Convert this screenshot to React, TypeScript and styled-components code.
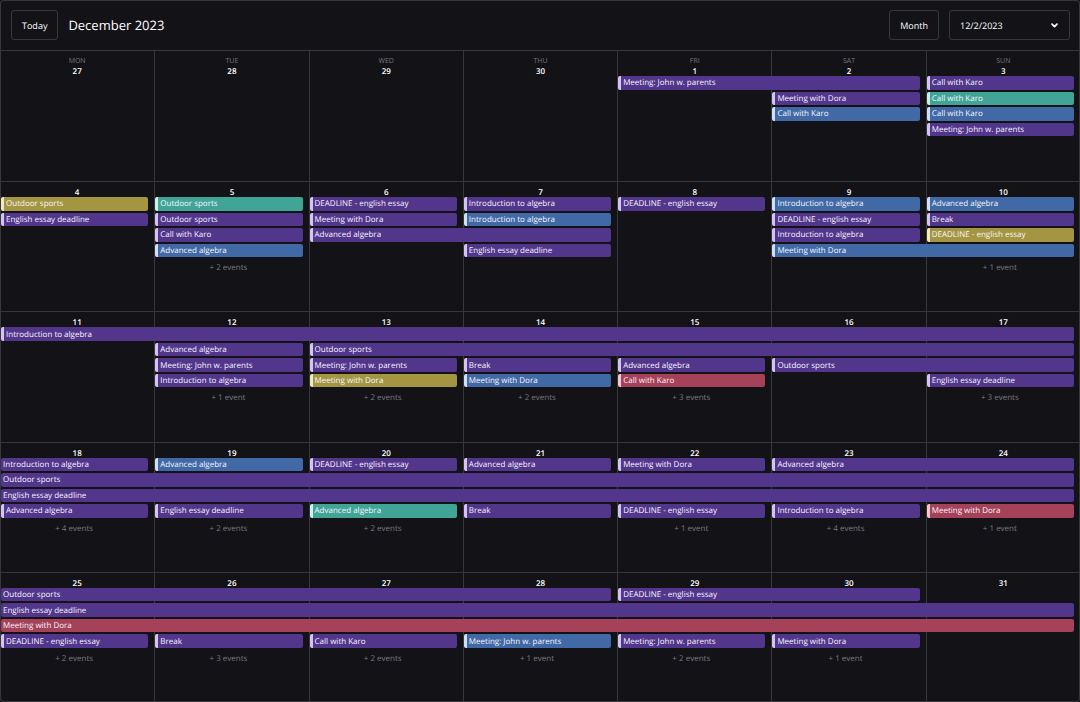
import React, { useState } from "react";
import styled, { createGlobalStyle } from "styled-components";

type Tone = "purple" | "blue" | "teal" | "olive" | "red";

interface CalendarEvent {
  title: string;
  lane: number;
  start: number;
  span: number;
  tone: Tone;
  continued: boolean;
}

interface Week {
  days: number[];
  events: CalendarEvent[];
  more: number[];
}

const line = "#38373b";

const tones: Record<Tone, { fill: string; edge: string }> = {
  purple: { fill: "#51368b", edge: "#d5c3f3" },
  blue: { fill: "#4069a5", edge: "#cfe0f7" },
  teal: { fill: "#40a497", edge: "#c8f3ec" },
  olive: { fill: "#a39541", edge: "#f1e9be" },
  red: { fill: "#a54158", edge: "#f6c6d1" },
};

const ev = (
  lane: number,
  start: number,
  span: number,
  title: string,
  tone: Tone = "purple",
  continued = false
): CalendarEvent => ({ lane, start, span, title, tone, continued });

const ALGEBRA = "Introduction to algebra";
const ADVANCED = "Advanced algebra";
const SPORTS = "Outdoor sports";
const ESSAY = "English essay deadline";
const DEADLINE = "DEADLINE - english essay";
const DORA = "Meeting with Dora";
const JOHN = "Meeting: John w. parents";
const KARO = "Call with Karo";
const BREAK = "Break";

const weekdays = ["MON", "TUE", "WED", "THU", "FRI", "SAT", "SUN"];

const weeks: Week[] = [
  {
    days: [27, 28, 29, 30, 1, 2, 3],
    events: [
      ev(1, 5, 2, JOHN),
      ev(1, 7, 1, KARO),
      ev(2, 6, 1, DORA),
      ev(2, 7, 1, KARO, "teal"),
      ev(3, 6, 1, KARO, "blue"),
      ev(3, 7, 1, KARO, "blue"),
      ev(4, 7, 1, JOHN),
    ],
    more: [0, 0, 0, 0, 0, 0, 0],
  },
  {
    days: [4, 5, 6, 7, 8, 9, 10],
    events: [
      ev(1, 1, 1, SPORTS, "olive"),
      ev(1, 2, 1, SPORTS, "teal"),
      ev(1, 3, 1, DEADLINE),
      ev(1, 4, 1, ALGEBRA),
      ev(1, 5, 1, DEADLINE),
      ev(1, 6, 1, ALGEBRA, "blue"),
      ev(1, 7, 1, ADVANCED, "blue"),
      ev(2, 1, 1, ESSAY),
      ev(2, 2, 1, SPORTS),
      ev(2, 3, 1, DORA),
      ev(2, 4, 1, ALGEBRA, "blue"),
      ev(2, 6, 1, DEADLINE),
      ev(2, 7, 1, BREAK),
      ev(3, 2, 1, KARO),
      ev(3, 3, 2, ADVANCED),
      ev(3, 6, 1, ALGEBRA),
      ev(3, 7, 1, DEADLINE, "olive"),
      ev(4, 2, 1, ADVANCED, "blue"),
      ev(4, 4, 1, ESSAY),
      ev(4, 6, 2, DORA, "blue"),
    ],
    more: [0, 2, 0, 0, 0, 0, 1],
  },
  {
    days: [11, 12, 13, 14, 15, 16, 17],
    events: [
      ev(1, 1, 7, ALGEBRA),
      ev(2, 2, 1, ADVANCED),
      ev(2, 3, 5, SPORTS),
      ev(3, 2, 1, JOHN),
      ev(3, 3, 1, JOHN),
      ev(3, 4, 1, BREAK),
      ev(3, 5, 1, ADVANCED),
      ev(3, 6, 2, SPORTS),
      ev(4, 2, 1, ALGEBRA),
      ev(4, 3, 1, DORA, "olive"),
      ev(4, 4, 1, DORA, "blue"),
      ev(4, 5, 1, KARO, "red"),
      ev(4, 7, 1, ESSAY),
    ],
    more: [0, 1, 2, 2, 3, 0, 3],
  },
  {
    days: [18, 19, 20, 21, 22, 23, 24],
    events: [
      ev(1, 1, 1, ALGEBRA, "purple", true),
      ev(1, 2, 1, ADVANCED, "blue"),
      ev(1, 3, 1, DEADLINE),
      ev(1, 4, 1, ADVANCED),
      ev(1, 5, 1, DORA),
      ev(1, 6, 2, ADVANCED),
      ev(2, 1, 7, SPORTS, "purple", true),
      ev(3, 1, 7, ESSAY, "purple", true),
      ev(4, 1, 1, ADVANCED),
      ev(4, 2, 1, ESSAY),
      ev(4, 3, 1, ADVANCED, "teal"),
      ev(4, 4, 1, BREAK),
      ev(4, 5, 1, DEADLINE),
      ev(4, 6, 1, ALGEBRA),
      ev(4, 7, 1, DORA, "red"),
    ],
    more: [4, 2, 2, 0, 1, 4, 1],
  },
  {
    days: [25, 26, 27, 28, 29, 30, 31],
    events: [
      ev(1, 1, 4, SPORTS, "purple", true),
      ev(1, 5, 2, DEADLINE),
      ev(2, 1, 7, ESSAY, "purple", true),
      ev(3, 1, 7, DORA, "red", true),
      ev(4, 1, 1, DEADLINE),
      ev(4, 2, 1, BREAK),
      ev(4, 3, 1, KARO),
      ev(4, 4, 1, JOHN, "blue"),
      ev(4, 5, 1, JOHN),
      ev(4, 6, 1, DORA),
    ],
    more: [2, 3, 2, 1, 2, 1, 0],
  },
];

const GlobalStyle = createGlobalStyle`
  * { box-sizing: border-box; }
  body { margin: 0; background: #131217; }
  button, select { font: inherit; color: inherit; margin: 0; text-rendering: inherit; }
`;

const Calendar = styled.main`
  display: flex;
  flex-direction: column;
  min-height: 100vh;
  background: #131217;
  color: #fff;
  font-family: "Open Sans", "Noto Sans", sans-serif;
  text-rendering: geometricPrecision;
  border-radius: 4px;
  box-shadow: inset 0 0 0 1px ${line};
`;

const Toolbar = styled.header`
  display: flex;
  align-items: center;
  gap: 10px;
  height: 51px;
  padding: 0 10px 0 11px;
  border-bottom: 1px solid ${line};
`;

const Title = styled.h1`
  flex: 1;
  margin: 0;
  font-size: 13px;
  line-height: 20px;
  font-weight: 500;
`;

const ToolButton = styled.button`
  height: 30px;
  padding: 0 10px;
  border: 1px solid ${line};
  border-radius: 3px;
  background: transparent;
  font-size: 9px;
  font-weight: 500;
`;

const DateField = styled.label`
  display: grid;
  align-items: center;
  width: 121px;
  height: 30px;

  > * { grid-area: 1 / 1; }
`;

const DateSelect = styled.select`
  appearance: none;
  width: 100%;
  height: 100%;
  padding: 0 10px;
  border: 1px solid ${line};
  border-radius: 3px;
  background: transparent;
  font-size: 9px;
  font-weight: 500;
`;

const Chevron = styled.svg`
  justify-self: end;
  margin-right: 12px;
  pointer-events: none;
`;

const Month = styled.div`
  flex: 1;
  display: grid;
  grid-auto-rows: 1fr;
`;

const WeekGrid = styled.section<{ $first: boolean }>`
  display: grid;
  grid-template-columns: repeat(7, minmax(0, 1fr));
  grid-template-rows: ${(p) => (p.$first ? 25 : 16)}px 60px 22px 1fr;
  min-height: 130px;
`;

const Day = styled.div<{ $column: number; $first: boolean }>`
  grid-column: ${(p) => p.$column};
  grid-row: 1 / -1;
  border-left: ${(p) => (p.$column > 1 ? `1px solid ${line}` : "0")};
  border-top: ${(p) => (p.$first ? "0" : `1px solid ${line}`)};
  padding-top: 6px;
  text-align: center;
  line-height: 10px;
`;

const Weekday = styled.div`
  font-size: 7px;
  color: #77767b;
`;

const DayNumber = styled.div`
  font-size: 8px;
  font-weight: 600;
`;

const Lanes = styled.div`
  grid-column: 1 / -1;
  grid-row: 2;
  display: grid;
  grid-template-columns: subgrid;
  grid-template-rows: repeat(4, minmax(0, 1fr));
  row-gap: 2px;
`;

const EventBar = styled.button<{ $event: CalendarEvent }>`
  grid-column: ${(p) => p.$event.start} / span ${(p) => p.$event.span};
  grid-row: ${(p) => p.$event.lane};
  margin: 0 6px 0 1px;
  padding: 0 2px;
  border: 0;
  border-left: ${(p) =>
    p.$event.continued ? "0" : `3px solid ${tones[p.$event.tone].edge}`};
  border-radius: 2px;
  background: ${(p) => tones[p.$event.tone].fill};
  color: #f8f5fd;
  font-size: 8px;
  line-height: 13px;
  text-align: left;
  white-space: nowrap;
  overflow: hidden;
`;

const MoreButton = styled.button<{ $column: number }>`
  grid-column: ${(p) => p.$column};
  grid-row: 3;
  margin: 0 6px 0 0;
  padding: 0;
  border: 0;
  background: transparent;
  color: #7b7a80;
  font-size: 8px;
  line-height: 12px;
  text-align: center;
`;

export default function App() {
  const [date, setDate] = useState("12/2/2023");

  return (
    <>
      <GlobalStyle />
      <Calendar>
        <Toolbar>
          <ToolButton type="button">Today</ToolButton>
          <Title>December 2023</Title>
          <ToolButton type="button">Month</ToolButton>
          <DateField>
            <DateSelect
              aria-label="Date"
              value={date}
              onChange={(e) => setDate(e.target.value)}
            >
              <option>12/2/2023</option>
            </DateSelect>
            <Chevron width="7" height="5" viewBox="0 0 7 5" fill="none">
              <path
                d="M1 1.1 3.5 3.6 6 1.1"
                stroke="#fff"
                strokeWidth="1.7"
                strokeLinecap="round"
                strokeLinejoin="round"
              />
            </Chevron>
          </DateField>
        </Toolbar>
        <Month>
          {weeks.map((week, w) => (
            <WeekGrid key={w} $first={w === 0}>
              {week.days.map((day, i) => (
                <Day key={day} $column={i + 1} $first={w === 0}>
                  {w === 0 && <Weekday>{weekdays[i]}</Weekday>}
                  <DayNumber>{day}</DayNumber>
                </Day>
              ))}
              <Lanes>
                {week.events.map((event) => (
                  <EventBar
                    key={`${event.lane}-${event.start}`}
                    type="button"
                    $event={event}
                  >
                    {event.title}
                  </EventBar>
                ))}
              </Lanes>
              {week.more.map(
                (count, i) =>
                  count > 0 && (
                    <MoreButton key={i} type="button" $column={i + 1}>
                      + {count} {count === 1 ? "event" : "events"}
                    </MoreButton>
                  )
              )}
            </WeekGrid>
          ))}
        </Month>
      </Calendar>
    </>
  );
}
